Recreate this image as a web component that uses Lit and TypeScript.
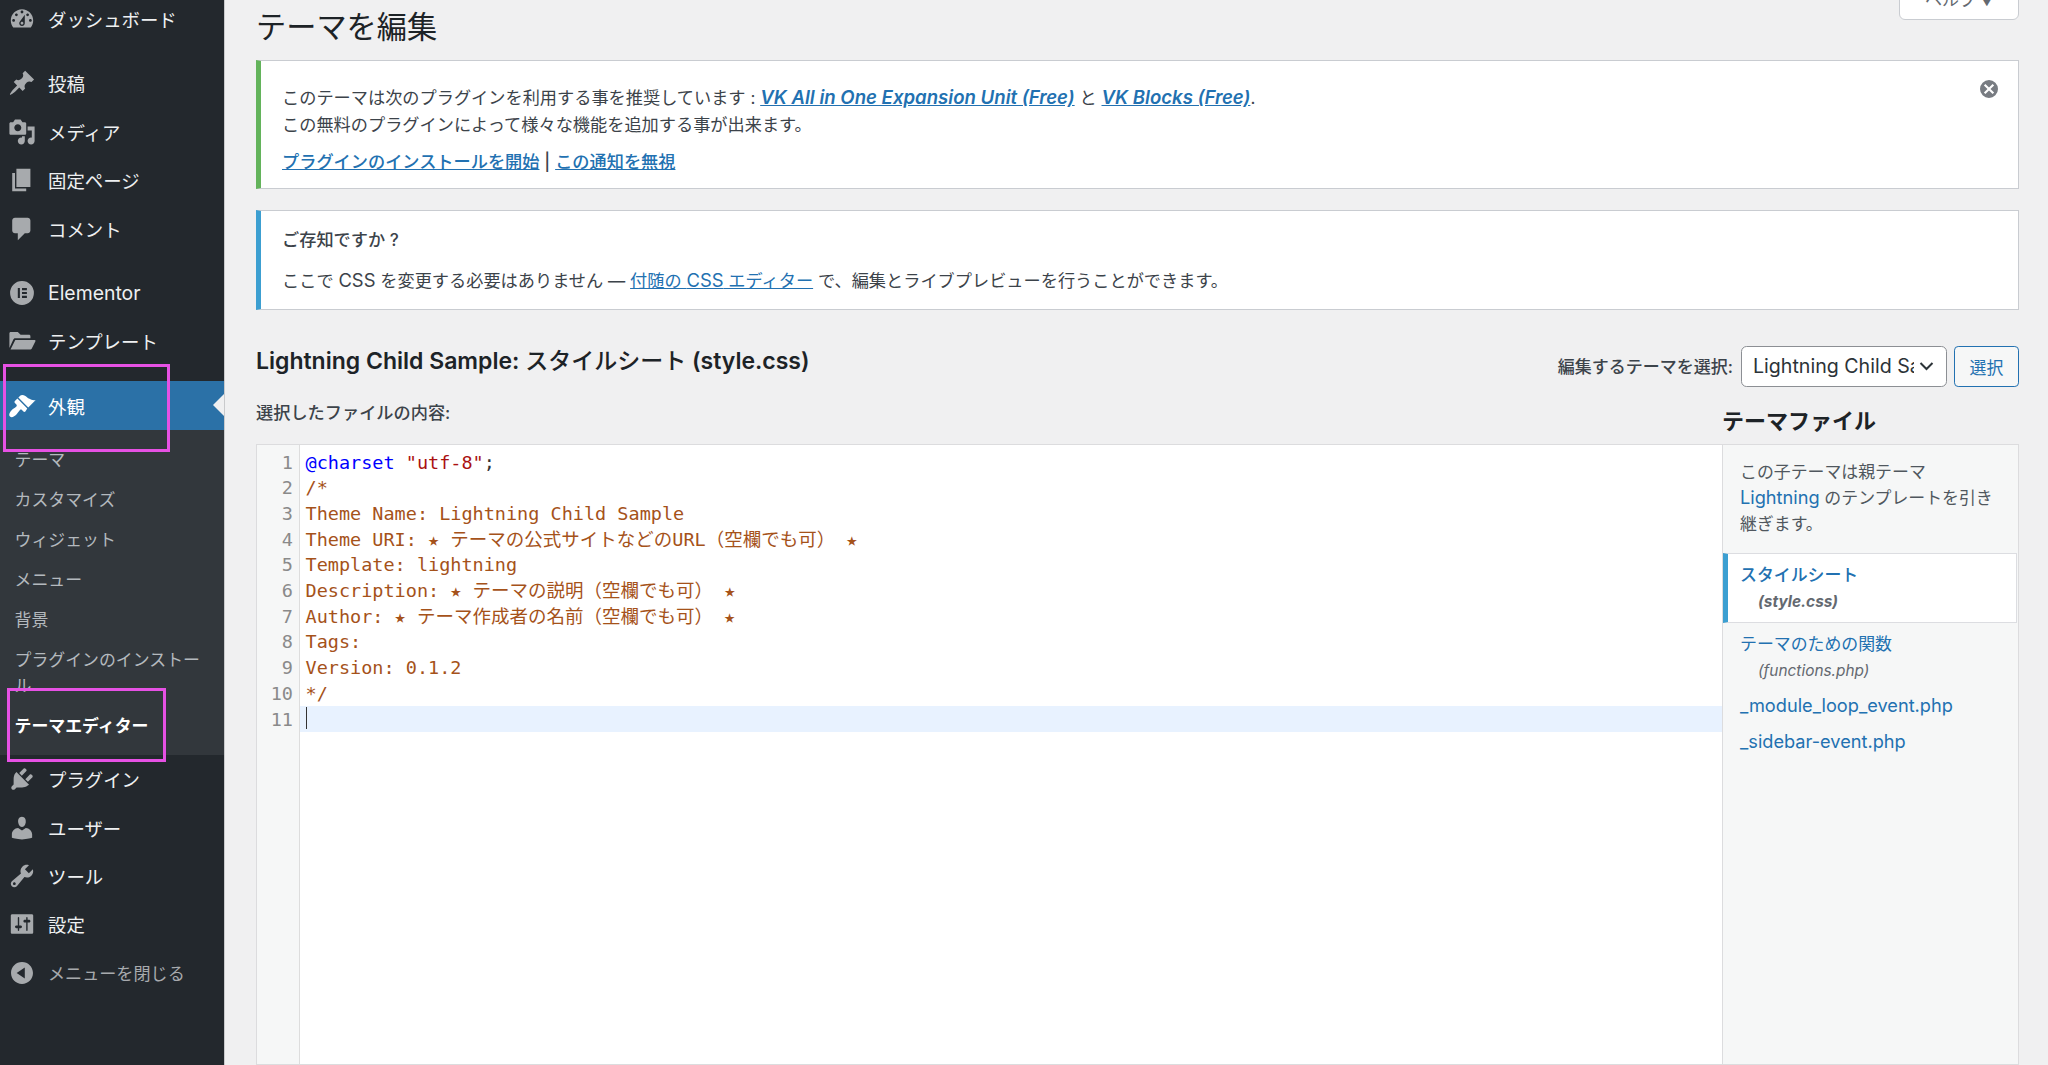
import { LitElement, html, css, svg } from "lit";
import { customElement } from "lit/decorators.js";

const ICONS: Record<string, string> = {
  dashboard: "M3.76 16h12.48c1.1-1.37 1.76-3.11 1.76-5 0-4.42-3.58-8-8-8s-8 3.58-8 8c0 1.89.66 3.63 1.76 5zM10 4c.55 0 1 .45 1 1s-.45 1-1 1-1-.45-1-1 .45-1 1-1zM6 6c.55 0 1 .45 1 1s-.45 1-1 1-1-.45-1-1 .45-1 1-1zm8 0c.55 0 1 .45 1 1s-.45 1-1 1-1-.45-1-1 .45-1 1-1zm-5.37 5.55L12 7v6c0 1.1-.9 2-2 2s-2-.9-2-2c0-.57.24-1.08.63-1.45zM4 10c.55 0 1 .45 1 1s-.45 1-1 1-1-.45-1-1 .45-1 1-1zm12 0c.55 0 1 .45 1 1s-.45 1-1 1-1-.45-1-1 .45-1 1-1zm-5 3c0-.55-.45-1-1-1s-1 .45-1 1 .45 1 1 1 1-.45 1-1z",
  pin: "M10.44 3.02l1.82-1.82 6.36 6.35-1.83 1.82c-1.05-.68-2.48-.57-3.41.36l-.75.75c-.92.93-1.04 2.35-.35 3.41l-1.83 1.82-2.41-2.41-2.8 2.79c-.42.42-3.38 2.71-3.8 2.29s1.86-3.39 2.28-3.81l2.79-2.79L4.1 9.36l1.83-1.82c1.05.69 2.48.57 3.4-.36l.75-.75c.93-.92 1.05-2.35.36-3.41z",
  media: "M13 11V4c0-.55-.45-1-1-1h-1.67L9 1H5L3.67 3H2c-.55 0-1 .45-1 1v7c0 .55.45 1 1 1h10c.55 0 1-.45 1-1zM7 4.5c1.38 0 2.5 1.12 2.5 2.5S8.38 9.5 7 9.5 4.5 8.38 4.5 7 5.62 4.5 7 4.5zM14 6h5v10.5c0 1.38-1.12 2.5-2.5 2.5S14 17.88 14 16.5s1.12-2.5 2.5-2.5c.17 0 .34.02.5.05V9h-3V6zm-4 8.05V13h2v3.5c0 1.38-1.12 2.5-2.5 2.5S7 17.88 7 16.5 8.12 14 9.5 14c.17 0 .34.02.5.05z",
  page: "M6 15V2h10v13H6zm-1 1h8v2H3V5h2v11z",
  comment: "M5 2h9c1.1 0 2 .9 2 2v7c0 1.1-.9 2-2 2h-2l-5 5v-5H5c-1.1 0-2-.9-2-2V4c0-1.1.9-2 2-2z",
  elementor: "M10 1.5a8.5 8.5 0 1 0 0 17 8.5 8.5 0 0 0 0-17zM7 6.5h1.5v7H7zM10 6.5h3.5V8H10zM10 9.25h3.5v1.5H10zM10 12h3.5v1.5H10z",
  folder: "M1 4.5c0-.6.4-1 1-1h5l2 2h6c.6 0 1 .4 1 1V8H5.2c-.6 0-1.1.3-1.3.8L1 15zM5.2 9.2H19c.5 0 .8.5.6 1l-2.7 5.3c-.2.3-.5.5-.9.5H1.8z",
  brush: "M14.48 11.06L7.41 3.99l1.5-1.5c.5-.56 2.3-.47 3.51.32 1.21.8 1.43 1.28 2.91 2.1 1.18.64 2.45 1.26 4.45.85zm-.71.71L6.7 4.7 4.93 6.47c-.39.39-.39 1.02 0 1.41l1.06 1.06c.39.39.39 1.03 0 1.42-.6.6-1.43 1.11-2.21 1.69-.35.26-.7.53-1.01.84-1.34 1.34-2.59 3.36-1.37 4.6 1.24 1.23 3.26-.02 4.61-1.42.31-.31.58-.66.84-1.01.58-.78 1.09-1.61 1.69-2.21.39-.39 1.03-.39 1.42 0l1.06 1.06c.39.39 1.02.39 1.41 0z",
  plugin: "M13.11 4.36L9.87 7.6 8 5.73l3.24-3.24c.35-.34 1.05-.2 1.56.32.52.51.66 1.21.31 1.55zm-8 1.77l.91-1.12 9.01 9.01-1.19.84c-.71.71-2.63 1.16-3.82 1.16H6.14L4.9 17.26c-.59.59-1.54.59-2.12 0-.59-.58-.59-1.53 0-2.12l1.24-1.24v-3.88c0-1.13.4-3.19 1.09-3.89zm7.26 3.97l3.24-3.24c.34-.35 1.04-.21 1.55.31.52.51.66 1.21.31 1.55l-3.24 3.25z",
  users: "M10 9.25c-2.27 0-2.73-3.44-2.73-3.44C7 4.02 7.82 2 9.97 2c2.16 0 2.98 2.02 2.71 3.81 0 0-.41 3.44-2.68 3.44zm0 2.57L12.72 10c2.39 0 4.52 2.33 4.52 4.53v2.49s-3.65 1.13-7.24 1.13c-3.65 0-7.24-1.13-7.24-1.13v-2.49c0-2.25 1.94-4.48 4.47-4.48z",
  tools: "M16.68 9.77c-1.34 1.34-3.3 1.67-4.95.99l-5.41 6.52c-.99.99-2.59.99-3.58 0s-.99-2.59 0-3.57l6.52-5.42c-.68-1.65-.35-3.61.99-4.95 1.28-1.28 3.12-1.62 4.72-1.06l-2.89 2.89 2.82 2.82 2.86-2.87c.53 1.58.18 3.39-1.08 4.65zM3.81 16.21c.4.39 1.04.39 1.43 0 .4-.4.4-1.04 0-1.43-.39-.4-1.03-.4-1.43 0-.39.39-.39 1.03 0 1.43z",
  settings: "M18 16V4c0-.55-.45-1-1-1H3c-.55 0-1 .45-1 1v12c0 .55.45 1 1 1h14c.55 0 1-.45 1-1zM8 11h1c.55 0 1 .45 1 1s-.45 1-1 1H8v1.5c0 .28-.22.5-.5.5s-.5-.22-.5-.5V13H6c-.55 0-1-.45-1-1s.45-1 1-1h1V5.5c0-.28.22-.5.5-.5s.5.22.5.5V11zm5-2h-1c-.55 0-1-.45-1-1s.45-1 1-1h1V5.5c0-.28.22-.5.5-.5s.5.22.5.5V7h1c.55 0 1 .45 1 1s-.45 1-1 1h-1v5.5c0 .28-.22.5-.5.5s-.5-.22-.5-.5V9z",
  collapse: "M10 2.16c4.33 0 7.84 3.51 7.84 7.84s-3.51 7.84-7.84 7.84S2.16 14.33 2.16 10 5.71 2.16 10 2.16zm2 11.72V6.12L6.18 9.97z",
};

const icon = (name: string) =>
  html`<svg class="ic" viewBox="0 0 20 20" aria-hidden="true">${svg`<path fill-rule="evenodd" d=${ICONS[name]}></path>`}</svg>`;

const item = (name: string, label: string, cls = "") =>
  html`<li class="item">${icon(name)}<span class=${cls}>${label}</span></li>`;

const SUBS = ["テーマ", "カスタマイズ", "ウィジェット", "メニュー", "背景", "プラグインのインストール"];

@customElement("app-root")
export class AppRoot extends LitElement {
  static styles = css`
    :host {
      display: flex;
      position: relative;
      width: 2048px;
      height: 1065px;
      overflow: hidden;
      background: #f0f0f1;
      color: #3c434a;
      font-family: Inter, "Noto Sans CJK JP", sans-serif;
      font-size: 18.4px;
    }
    a { color: #2271b1; text-decoration: underline; }

    /* admin menu */
    .menu {
      flex: 0 0 224px;
      background: #23282d;
      border-right: 1px solid #c9cacc;
      box-sizing: content-box;
      height: 1065px;
      overflow: hidden;
    }
    .menu ul { list-style: none; margin: 0; padding: 0; }
    .menu .top { margin-top: -5.2px; }
    .item {
      display: flex;
      align-items: center;
      height: 48.4px;
      color: #eef0f1;
      padding-left: 8px;
      position: relative;
    }
    .item .ic { width: 28px; height: 28px; fill: #a7aaad; margin-right: 12px; flex: none; }
    .item .lat { font-size: 19.4px; }
    .sep { height: 16px; }
    .item.active { background: #2b71a7; color: #fff; height: 49px; margin-top: -0.5px; }
    .item.active .ic { fill: #fff; }
    .item.active::after {
      content: "";
      position: absolute;
      right: 0;
      top: 13px;
      border: 11px solid transparent;
      border-right-color: #f0f0f1;
      border-left-width: 0;
    }
    .menu .sub { background: #32373c; padding: 11px 0 10px; height: 325px; box-sizing: border-box; }
    .sub li {
      padding: 7.2px 8px 7.2px 14.5px;
      font-size: 16.9px;
      line-height: 25.6px;
      color: #b4b9be;
      position: relative;
    }
    .sub li.cur { color: #fff; font-weight: 700; }
    .sub li.cur::before {
      content: "";
      position: absolute;
      inset: -14px 0 0 0;
      background: #32373c;
    }
    .sub li.cur span { position: relative; }
    .item.fold { color: #a7aaad; font-size: 17.1px; }

    /* pink annotations */
    .mark { position: absolute; border: 3px solid #e651e4; box-sizing: border-box; }
    .m1 { left: 3px; top: 364px; width: 167px; height: 88px; }
    .m2 { left: 7px; top: 688px; width: 159px; height: 74px; }

    /* content */
    .main {
      flex: 1;
      min-width: 0;
      padding: 0 29px 0 31px;
      display: flex;
      flex-direction: column;
      position: relative;
    }
    h1 { margin: 0; font-size: 30.2px; font-weight: 400; line-height: 54px; color: #1d2327; height: 52px; }
    .help {
      position: absolute;
      right: 29px;
      top: -12px;
      width: 120px;
      height: 32px;
      box-sizing: border-box;
      background: #fff;
      border: 1.4px solid #c9ccd1;
      border-radius: 0 0 6px 6px;
      text-align: center;
      font-size: 17px;
      line-height: 22px;
      color: #646970;
    }
    .help span { font-size: 12px; }
    .notice {
      position: relative;
      background: #fff;
      border: 1.4px solid #c9ccd1;
      border-left-width: 5.6px;
      padding-left: 21px;
      font-size: 17.2px;
      box-sizing: border-box;
    }
    .n1 { margin-top: 8px; height: 129px; border-left-color: #63b35b; padding-top: 23px; }
    .n2 { margin-top: 21px; height: 99.5px; border-left-color: #3c9fd1; padding-top: 14.5px; }
    .notice p { margin: 0; line-height: 27.4px; }
    .notice b { font-weight: 500; }
    .n1 .actions { margin-top: 9px; }
    .n2 p + p { margin-top: 14.5px; }
    .n2 .css { font-size: 18.4px; }
    .vk { font-weight: 600; font-style: italic; font-size: 18.6px; }
    .x { position: absolute; right: 19px; top: 18px; width: 20px; height: 20px; fill: #787c82; }

    .bar { display: flex; justify-content: space-between; align-items: flex-start; margin-top: 36px; height: 41px; }
    h2 { margin: 0; font-size: 23px; font-weight: 600; line-height: 28px; color: #1d2327; padding-top: 1px; }
    h2 span { font-weight: 500; }
    .picker { display: flex; align-items: center; gap: 7px; }
    .picker label { font-weight: 500; font-size: 17px; margin-right: 1px; padding-bottom: 2px; }
    .select {
      width: 206px;
      height: 41px;
      box-sizing: border-box;
      border: 1.4px solid #8c8f94;
      border-radius: 5.6px;
      background: #fff;
      display: flex;
      align-items: center;
      padding: 0 11px 0 11px;
      gap: 4px;
      font-size: 19.6px;
      color: #2c3338;
    }
    .select span { flex: 1; overflow: hidden; white-space: nowrap; }
    .select svg { width: 17px; height: 10px; flex: none; fill: none; stroke: #2c3338; stroke-width: 2; }
    .btn {
      width: 65px;
      height: 41px;
      box-sizing: border-box;
      border: 1.4px solid #2271b1;
      border-radius: 4.2px;
      background: #f6f7f7;
      color: #2271b1;
      display: flex;
      align-items: center;
      justify-content: center;
      font-size: 16.9px;
    }

    .work {
      flex: 1;
      min-height: 0;
      display: grid;
      grid-template-columns: 1fr 297px;
      grid-template-rows: 57px 1fr;
    }
    .lbl { font-size: 17.2px; font-weight: 500; padding-top: 13px; line-height: 26px; }
    .files-h { font-size: 22px; font-weight: 700; line-height: 28px; padding-top: 20px; color: #1d2327; }

    .editor {
      display: flex;
      background: #fff;
      border: 1.4px solid #dcdcde;
      border-right: 0;
      min-height: 0;
      font-family: "DejaVu Sans Mono", "Noto Sans CJK JP", monospace;
      font-size: 18.5px;
      line-height: 25.7px;
      color: #333;
    }
    .gutter {
      flex: 0 0 42px;
      background: #f6f7f7;
      border-right: 1.4px solid #dddddd;
      padding-top: 5px;
      box-sizing: content-box;
      text-align: right;
      color: #8a8a8a;
    }
    .gutter div { padding-right: 6px; }
    .code { flex: 1; padding-top: 5px; min-width: 0; }
    .ln { height: 25.7px; padding-left: 5.5px; white-space: pre; color: #a5521a; }
    .ln.cur { background: #e8f2ff; }
    .kw { color: #00f; }
    .str { color: #a11; }
    .pn { color: #333; }
    .caret { display: inline-block; width: 1.4px; height: 22px; background: #333; vertical-align: -4px; }

    .files {
      background: #f6f7f7;
      border: 1.4px solid #dcdcde;
      box-sizing: border-box;
      padding-top: 15px;
      font-size: 16.9px;
    }
    .files p { margin: 0 0 16px; padding: 0 17px; line-height: 25.6px; color: #50575e; }
    .files a { text-decoration: none; }
    .files p a { font-size: 18.2px; }
    .files ul { list-style: none; margin: 0; padding: 0; }
    .files li { padding: 0 17px; line-height: 27px; }
    .files li.on {
      background: #fff;
      border: 1.4px solid #dcdde1;
      border-left: 5.6px solid #3c9fd1;
      margin-right: 1px;
      padding: 8px 12px 0;
      height: 70px;
      box-sizing: border-box;
    }
    .files li.on a { font-weight: 500; }
    .files li em { display: block; padding-left: 18px; margin-top: -1px; font-size: 15.4px; color: #646970; }
    .files li.on em { font-weight: 700; }
    .files li.fn { padding-top: 8px; height: 64px; box-sizing: border-box; }
    .files li.ph { height: 36px; line-height: 36px; font-size: 18.2px; }
  `;

  render() {
    const lines = [
      html`<span class="kw">@charset</span> <span class="str">"utf-8"</span><span class="pn">;</span>`,
      "/*",
      "Theme Name: Lightning Child Sample",
      "Theme URI: ★ テーマの公式サイトなどのURL（空欄でも可） ★",
      "Template: lightning",
      "Description: ★ テーマの説明（空欄でも可） ★",
      "Author: ★ テーマ作成者の名前（空欄でも可） ★",
      "Tags:",
      "Version: 0.1.2",
      "*/",
      html`<span class="caret"></span>`,
    ];
    return html`
      <nav class="menu">
        <ul class="top">
          ${item("dashboard", "ダッシュボード")}
          <li class="sep"></li>
          ${item("pin", "投稿")}
          ${item("media", "メディア")}
          ${item("page", "固定ページ")}
          ${item("comment", "コメント")}
          <li class="sep"></li>
          ${item("elementor", "Elementor", "lat")}
          ${item("folder", "テンプレート")}
          <li class="sep"></li>
          <li class="item active">${icon("brush")}<span>外観</span></li>
          <li>
            <ul class="sub">
              ${SUBS.map((s) => html`<li>${s}</li>`)}
              <li class="cur"><span>テーマエディター</span></li>
            </ul>
          </li>
          ${item("plugin", "プラグイン")}
          ${item("users", "ユーザー")}
          ${item("tools", "ツール")}
          ${item("settings", "設定")}
          <li class="item fold">${icon("collapse")}<span>メニューを閉じる</span></li>
        </ul>
      </nav>

      <main class="main">
        <div class="help">ヘルプ <span>▼</span></div>
        <h1>テーマを編集</h1>
        <section class="notice n1">
          <p>このテーマは次のプラグインを利用する事を推奨しています : <a class="vk" href="#">VK All in One Expansion Unit (Free)</a> と <a class="vk" href="#">VK Blocks (Free)</a>.</p>
          <p>この無料のプラグインによって様々な機能を追加する事が出来ます。</p>
          <p class="actions"><a href="#"><b>プラグインのインストールを開始</b></a> <b>|</b> <a href="#"><b>この通知を無視</b></a></p>
          <svg class="x" viewBox="0 0 20 20"><path fill-rule="evenodd" d="M10 1a9 9 0 1 0 0 18 9 9 0 0 0 0-18zm3.6 3.9 1.5 1.5L11.5 10l3.6 3.6-1.5 1.5L10 11.5l-3.6 3.6-1.5-1.5L8.5 10 4.9 6.4l1.5-1.5L10 8.5z"></path></svg>
        </section>
        <section class="notice n2">
          <p><b>ご存知ですか ?</b></p>
          <p>ここで <span class="css">CSS</span> を変更する必要はありません — <a href="#">付随の <span class="css">CSS</span> エディター</a> で、編集とライブプレビューを行うことができます。</p>
        </section>

        <div class="bar">
          <h2>Lightning Child Sample: <span>スタイルシート</span> (style.css)</h2>
          <div class="picker">
            <label>編集するテーマを選択:</label>
            <div class="select"><span>Lightning Child Sample</span><svg viewBox="0 0 16 10"><path d="M2 2l6 6 6-6"></path></svg></div>
            <div class="btn">選択</div>
          </div>
        </div>

        <div class="work">
          <div class="lbl">選択したファイルの内容:</div>
          <div class="files-h">テーマファイル</div>
          <div class="editor">
            <div class="gutter">${lines.map((_, i) => html`<div>${i + 1}</div>`)}</div>
            <div class="code">${lines.map((l, i) => html`<div class="ln ${i === 10 ? "cur" : ""}">${l}</div>`)}</div>
          </div>
          <aside class="files">
            <p>この子テーマは親テーマ <a href="#">Lightning</a> のテンプレートを引き継ぎます。</p>
            <ul>
              <li class="on"><a href="#">スタイルシート</a><em>(style.css)</em></li>
              <li class="fn"><a href="#">テーマのための関数</a><em>(functions.php)</em></li>
              <li class="ph"><a href="#">_module_loop_event.php</a></li>
              <li class="ph"><a href="#">_sidebar-event.php</a></li>
            </ul>
          </aside>
        </div>
      </main>

      <div class="mark m1"></div>
      <div class="mark m2"></div>
    `;
  }
}
